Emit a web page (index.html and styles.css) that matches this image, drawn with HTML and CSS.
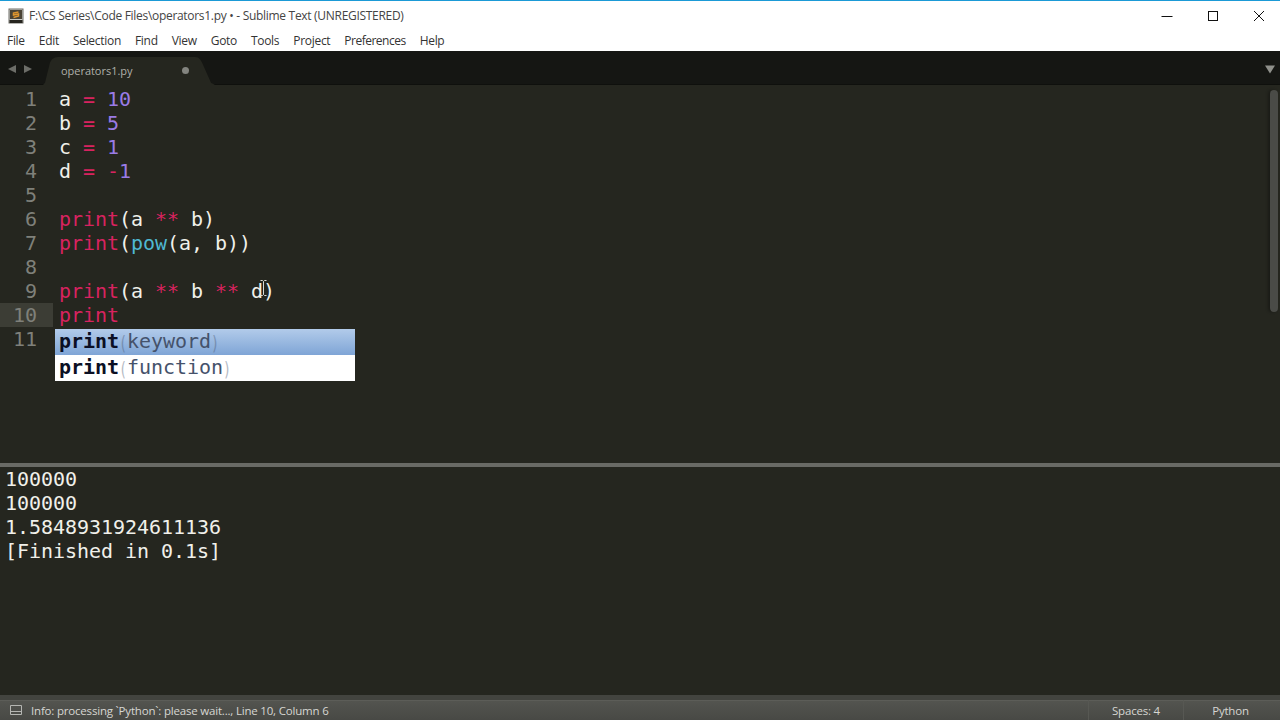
FILE: index.html
```html
<!DOCTYPE html>
<html lang="en">
<head>
<meta charset="utf-8">
<title>operators1.py - Sublime Text</title>
<link rel="stylesheet" href="styles.css">
</head>
<body>
<div class="app">
  <header class="titlebar">
    <svg class="app-icon" width="16" height="16" viewBox="0 0 16 16">
      <rect x="1" y="1" width="14" height="14" fill="#c9c9c4" stroke="#6e6e68"/>
      <rect x="2" y="2" width="12" height="9" fill="#4a4336"/>
      <path d="M10.5 4 L5.5 5 V7 L10.5 6 V8 L5.5 9.5" fill="none" stroke="#e0962e" stroke-width="1.5"/>
      <rect x="1.5" y="12" width="13" height="3" fill="#26251f"/>
    </svg>
    <span class="title-text">F:\CS Series\Code Files\operators1.py • - Sublime Text (UNREGISTERED)</span>
    <div class="win-buttons">
      <svg class="win-btn" width="46" height="20" viewBox="0 0 46 20"><path d="M17.5 10.5 H28.5" stroke="#111" fill="none"/></svg>
      <svg class="win-btn" width="46" height="20" viewBox="0 0 46 20"><rect x="18.5" y="5.5" width="9" height="9" stroke="#111" fill="none"/></svg>
      <svg class="win-btn" width="46" height="20" viewBox="0 0 46 20"><path d="M18 5 L28 15 M28 5 L18 15" stroke="#111" fill="none"/></svg>
    </div>
  </header>
  <nav class="menubar">
    <span>File</span><span>Edit</span><span>Selection</span><span>Find</span><span>View</span><span>Goto</span><span>Tools</span><span>Project</span><span class="tight">Preferences</span><span>Help</span>
  </nav>
  <div class="tabbar">
    <div class="tab-arrows">
      <svg width="10" height="10" viewBox="0 0 10 10"><path d="M9 1 V9 L1 5 Z" fill="#6c6d68"/></svg>
      <svg width="10" height="10" viewBox="0 0 10 10"><path d="M1 1 V9 L9 5 Z" fill="#6c6d68"/></svg>
    </div>
    <div class="tab">
      <span class="tab-name">operators1.py</span>
      <span class="tab-dot"></span>
    </div>
    <svg class="tab-menu" width="10" height="9" viewBox="0 0 10 9"><path d="M0 0.5 H10 L5 8.5 Z" fill="#8f908b"/></svg>
  </div>
  <main class="editor">
    <div class="code">
      <div class="line"><span class="ln">1</span><span class="src">a <i class="op">=</i> <i class="num">10</i></span></div>
      <div class="line"><span class="ln">2</span><span class="src">b <i class="op">=</i> <i class="num">5</i></span></div>
      <div class="line"><span class="ln">3</span><span class="src">c <i class="op">=</i> <i class="num">1</i></span></div>
      <div class="line"><span class="ln">4</span><span class="src">d <i class="op">=</i> <i class="op">-</i><i class="num">1</i></span></div>
      <div class="line"><span class="ln">5</span><span class="src"></span></div>
      <div class="line"><span class="ln">6</span><span class="src"><i class="op">print</i>(a <i class="op">**</i> b)</span></div>
      <div class="line"><span class="ln">7</span><span class="src"><i class="op">print</i>(<i class="fn">pow</i>(a, b))</span></div>
      <div class="line"><span class="ln">8</span><span class="src"></span></div>
      <div class="line"><span class="ln">9</span><span class="src"><i class="op">print</i>(a <i class="op">**</i> b <i class="op">**</i> d)</span></div>
      <div class="line current"><span class="ln">10</span><span class="src"><i class="op">print</i></span></div>
      <div class="line"><span class="ln">11</span><span class="src"></span></div>
    </div>
    <div class="popup">
      <div class="item selected"><b>print</b><span class="hint"><span class="paren">(</span>keyword<span class="paren">)</span></span></div>
      <div class="item"><b>print</b><span class="hint"><span class="paren">(</span>function<span class="paren">)</span></span></div>
    </div>
    <svg class="ibeam" width="7" height="16" viewBox="0 0 7 16"><path d="M0.5 0.5 H2.5 L3.5 1.5 L4.5 0.5 H6.5 M3.5 1.5 V14.5 M0.5 15.5 H2.5 L3.5 14.5 L4.5 15.5 H6.5" fill="none" stroke="#d8d8d4"/></svg>
    <div class="scrollbar"></div>
  </main>
  <section class="output">
    <div>100000</div>
    <div>100000</div>
    <div>1.5848931924611136</div>
    <div>[Finished in 0.1s]</div>
  </section>
  <footer class="statusbar">
    <svg class="panel-icon" width="12" height="10" viewBox="0 0 12 10"><path d="M0.5 0.5 H11.5 V9.5 H0.5 Z M0.5 6.5 H11.5" fill="none" stroke="#b5b6b2"/></svg>
    <span class="status-msg">Info: processing `Python`: please wait..., Line 10, Column 6</span>
    <span class="status-cell spaces">Spaces: 4</span>
    <span class="status-cell syntax">Python</span>
  </footer>
</div>
</body>
</html>
```
FILE: styles.css
```css
* { box-sizing: border-box; }
html, body { margin: 0; height: 100%; overflow: hidden; }
body { font-family: "Open Sans", "Noto Sans", sans-serif; background: #25261f; }
i { font-style: normal; }

.app { display: flex; flex-direction: column; width: 1280px; height: 720px; }

.titlebar {
  display: flex; align-items: center; flex: 0 0 30px;
  border-top: 1px solid #1b9ad6;
  background: #fff;
  padding-left: 8px;
}
.app-icon { flex: none; }
.title-text { margin-left: 5px; font-size: 12px; color: #444; letter-spacing: -0.3px; white-space: nowrap; }
.win-buttons { margin-left: auto; margin-right: -2px; display: flex; }
.win-btn { display: block; }

.menubar {
  display: flex; flex: 0 0 21px; align-items: center; gap: 14px;
  background: #fff; padding: 0 0 0 7px;
  font-size: 12px; color: #333; letter-spacing: -0.3px;
}
.menubar .tight { letter-spacing: -0.5px; }

.tabbar {
  display: flex; align-items: flex-end; flex: 0 0 34px; position: relative;
  background: #151613;
  border-bottom: 1px solid #0f100d;
}
.tab-arrows { display: flex; gap: 6px; align-self: flex-start; margin: 13px 0 0 7px; width: 36px; }
.tab-arrows svg { display: block; }
.tab {
  display: flex; align-items: center;
  width: 172px; height: 28px; padding: 0 26px 2px 18px; margin-bottom: -1px;
  background: #25261f;
  clip-path: polygon(0 100%, 2px 92%, 7px 20%, 9px 8%, 12px 2%, 15px 0, 152px 0, 155px 2%, 157px 8%, 159px 20%, 168px 92%, 172px 100%);
}
.tab-name { font-size: 11px; color: #b0b0aa; letter-spacing: -0.03px; }
.tab-dot { margin-left: auto; width: 7px; height: 7px; border-radius: 50%; background: #83847f; }
.tab-menu { position: absolute; right: 5px; top: 14px; }

.editor { position: relative; flex: 0 0 378px; background: #25261f; padding-top: 2px; overflow: hidden; }
.code { font-family: "DejaVu Sans Mono", monospace; font-size: 20px; letter-spacing: -0.04px; color: #f0f0ea; }
.line { display: flex; height: 24px; line-height: 24px; }
.ln { flex: 0 0 53px; padding-right: 16px; text-align: right; color: #7f807a; }
.current .ln { background: #3c3d35; }
.src { padding-left: 6px; white-space: pre; }
.op { color: #d8235f; }
.num { color: #9a7be6; }
.fn { color: #4fb9d2; }

.popup {
  position: absolute; left: 55px; top: 244px; width: 300px; height: 52px;
  background: #fff;
  font-family: "DejaVu Sans Mono", monospace; font-size: 20px; letter-spacing: -0.04px;
  color: #0b0f24;
}
.item { height: 26px; line-height: 24px; padding-left: 4px; white-space: pre; }
.item b { font-weight: 700; }
.selected { background: linear-gradient(#b2cbea, #7fa5d6); }
.hint { color: #45526b; }
.paren { display: inline-block; font-size: 13.4px; letter-spacing: 0; color: #45526b; opacity: 0.4; transform: scaleY(1.4); }

.ibeam { position: absolute; left: 260px; top: 195px; }
.scrollbar {
  position: absolute; right: 2px; top: 5px; width: 8px; height: 222px;
  border-radius: 4px; background: #4a4b47;
  box-shadow: -2px 0 3px rgba(0, 0, 0, 0.3);
}

.output {
  flex: 1; background: #25261f;
  border-top: 4px solid #696a65;
  padding: 0 0 0 5px;
  font-family: "DejaVu Sans Mono", monospace; font-size: 20px; letter-spacing: -0.04px; line-height: 24px;
  color: #f0f0ea;
}
.output div { white-space: pre; height: 24px; }

.statusbar {
  display: flex; align-items: center; flex: 0 0 25px;
  background: linear-gradient(#43443f 5px, #5c5d58 5px, #5c5d58 6px, #53544f 6px, #484945);
  font-size: 11.5px; color: #d6d6d2;
  padding: 5px 0 0 10px;
}
.panel-icon { flex: none; }
.status-msg { margin-left: 9px; letter-spacing: -0.19px; white-space: nowrap; }
.status-cell { height: 100%; display: flex; align-items: center; justify-content: center; letter-spacing: -0.2px; border-left: 1px solid #575853; }
.spaces { margin-left: auto; width: 95px; }
.syntax { width: 97px; padding-right: 3px; }
```
